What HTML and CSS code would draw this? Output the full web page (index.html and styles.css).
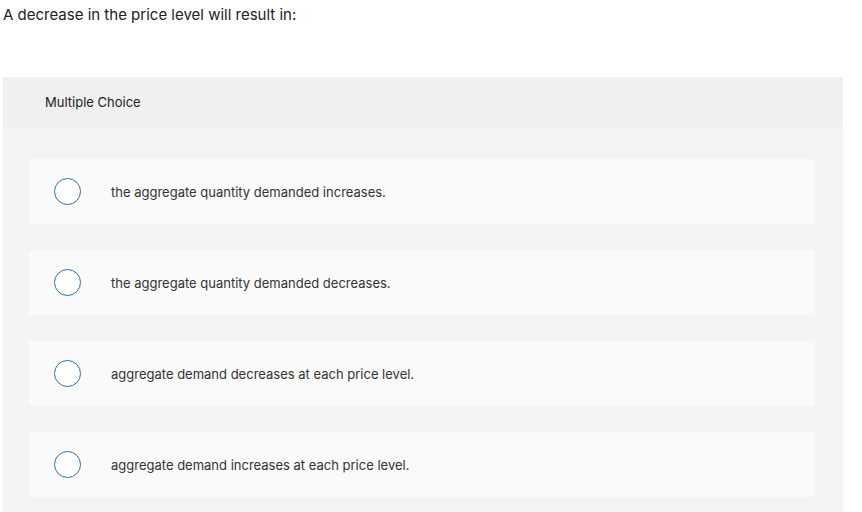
FILE: index.html
```html
<!DOCTYPE html>
<html>
<head>
<meta charset="utf-8">
<link rel="stylesheet" href="styles.css">
</head>
<body>
<p class="question">A decrease in the price level will result in:</p>
<section class="mc">
  <div class="mc-header">Multiple Choice</div>
  <div class="mc-body">
    <label class="option"><span class="radio"></span><span class="option-text">the aggregate quantity demanded increases.</span></label>
    <label class="option"><span class="radio"></span><span class="option-text">the aggregate quantity demanded decreases.</span></label>
    <label class="option"><span class="radio"></span><span class="option-text">aggregate demand decreases at each price level.</span></label>
    <label class="option"><span class="radio"></span><span class="option-text">aggregate demand increases at each price level.</span></label>
  </div>
</section>
</body>
</html>
```

FILE: styles.css
```css
html, body {
  margin: 0;
  padding: 0;
  background: #ffffff;
  font-family: "Inter", "Open Sans", sans-serif;
  color: #333333;
}
body {
  padding: 0 19px 0 3px;
}
.question {
  margin: 0;
  padding-top: 5px;
  font-size: 15px;
  line-height: 20px;
  color: #222222;
}
.mc {
  margin-top: 52px;
  background: #f4f4f4;
}
.mc-header {
  background: #f0f0f0;
  height: 50px;
  display: flex;
  align-items: center;
  padding-left: 42px;
  font-size: 13px;
  color: #222222;
}
.mc-body {
  padding: 32px 28px 20px 26px;
  display: flex;
  flex-direction: column;
  gap: 26px;
}
.option {
  display: flex;
  align-items: center;
  height: 65px;
  background: #fafafa;
  border-radius: 3px;
  padding-left: 25px;
}
.radio {
  width: 25px;
  height: 25px;
  border: 1.5px solid #2b6cb0;
  border-radius: 50%;
  background: #ffffff;
  flex: none;
}
.option-text {
  margin-left: 30px;
  font-size: 13px;
  color: #333333;
}
```
